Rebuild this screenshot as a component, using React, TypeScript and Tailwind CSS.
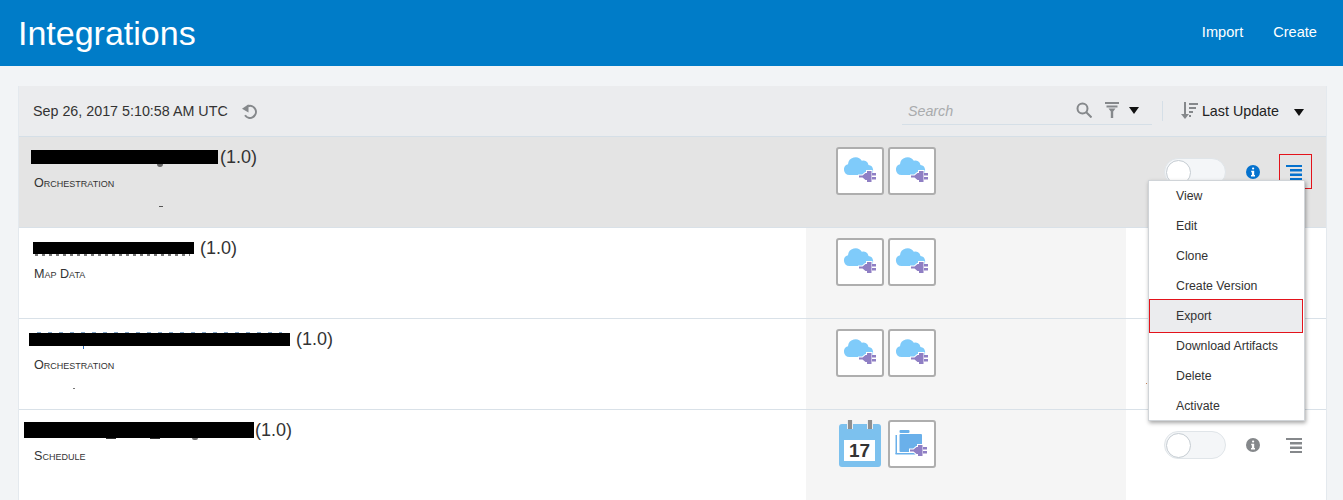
import React from "react";

const Plug = ({ dx = 0, dy = 0 }: { dx?: number; dy?: number }) => (
  <g transform={`translate(${dx} ${dy})`}>
    <path d="M22 28.500h3.500l3-2.500h1.500v-2h4.500v11h-4.500v-2h-1.500l-3-2.500h-3.500z" fill="#fff" stroke="#fff" strokeWidth="2" />
    <path d="M22 28.500h3.500l3-2.500h1.500v-2h4.500v11h-4.500v-2h-1.500l-3-2.500h-3.500z" fill="#8f7fc4" />
    <rect x="35" y="26" width="4" height="2.500" fill="#8f7fc4" />
    <rect x="35" y="30" width="4" height="2.500" fill="#8f7fc4" />
  </g>
);

const CloudTile = () => (
  <div className="w-[48px] h-[48px] bg-white border-2 border-[#aeaeae] rounded-[3px] shrink-0">
    <svg viewBox="0 0 44 44" className="w-[44px] h-[44px]">
      <path
        d="M11.500 26a5.500 5.500 0 0 1-1.500-10.800a7.500 7.500 0 0 1 13.800-3.400a5.200 5.200 0 0 1 6.700 4.100a5.300 5.300 0 0 1 1.500 10.100z"
        fill="#7fcbfa"
      />
      <Plug dx={-1} dy={-2} />
    </svg>
  </div>
);

const FolderTile = () => (
  <div className="w-[48px] h-[48px] bg-white border-2 border-[#aeaeae] rounded-[3px] shrink-0">
    <svg viewBox="0 0 44 44" className="w-[44px] h-[44px]">
      <rect x="9.500" y="8" width="10" height="3" rx="1" fill="#6ab0ea" />
      <rect x="5.500" y="13" width="1.500" height="19" fill="#6ab0ea" />
      <rect x="5.500" y="31" width="20" height="1.500" fill="#6ab0ea" />
      <rect x="9.500" y="12" width="22.500" height="18" rx="1" fill="#6ab0ea" />
      <Plug dx={-2} dy={-1} />
    </svg>
  </div>
);

const Calendar = () => (
  <div className="relative w-[42px] h-[47px] shrink-0 ml-[3px] mr-[7px]">
    <div className="absolute left-0 right-0 top-[4px] bottom-0 bg-[#7cc1ee] rounded-[3px]" />
    <div className="absolute left-[8px] top-0 w-[6px] h-[9px] bg-[#8f8f8f] border-x border-[#e8eef2]" />
    <div className="absolute left-[28px] top-0 w-[6px] h-[9px] bg-[#8f8f8f] border-x border-[#e8eef2]" />
    <div className="absolute left-[5px] right-[6px] top-[20px] h-[21px] bg-white flex items-center justify-center text-[19px] leading-none font-bold text-[#333]">
      17
    </div>
  </div>
);

const Info = ({ color }: { color: string }) => (
  <svg viewBox="0 0 14 14" className="w-[14px] h-[14px]">
    <circle cx="7" cy="7" r="7" fill={color} />
    <rect x="6" y="2.400" width="2.200" height="2.200" rx="1" fill="#fff" />
    <path d="M5.200 5.800h3v4.200h.8v1.400h-4v-1.400h.9v-2.800h-.7z" fill="#fff" />
  </svg>
);

const Lines = ({ color }: { color: string }) => (
  <svg viewBox="0 0 16 15" className="w-[16px] h-[15px]">
    <rect x="0" y="0" width="16" height="2" fill={color} />
    <rect x="4" y="4" width="12" height="2.500" fill={color} />
    <rect x="4" y="8.500" width="12" height="2.500" fill={color} />
    <rect x="4" y="13" width="12" height="2" fill={color} />
  </svg>
);

const Toggle = () => (
  <div className="w-[62px] h-[28px] rounded-full bg-[#f4f6f8] border border-[#e0e5e9] flex items-center pl-[1px] shrink-0">
    <div className="w-[25px] h-[25px] rounded-full bg-white border-[1.5px] border-[#c5ccd2]" />
  </div>
);

const Caret = () => (
  <svg viewBox="0 0 10 7" className="block w-[10px] h-[7px]">
    <path d="M0 0h10l-5 7z" fill="#111" />
  </svg>
);

type RowProps = {
  bar: string;
  after: string;
  type: string;
  selected?: boolean;
  schedule?: boolean;
  ticks?: React.ReactNode;
  speck?: React.ReactNode;
  mark?: boolean;
};

const Row = ({ bar, after, type, selected, schedule, ticks, speck, mark }: RowProps) => (
  <div className={`grid grid-cols-[787px_320px_1fr] h-[91px] border-b border-[#d9e1e8] ${selected ? "bg-[#e4e4e4]" : "bg-white"}`}>
    <div className="min-w-0">
      <div className="flex items-center h-[39px] pt-[1px] text-[18px] text-[#333]">
        <span className={`relative bg-black ${bar}`}>{ticks}</span>
        <span className={after}>(1.0)</span>
      </div>
      <div className="pl-[15px] text-[12.6px] leading-[14px] text-[#333] [font-variant-caps:small-caps]">{type}</div>
      {speck}
    </div>
    <div className={selected ? "pt-[10px]" : "pt-[10px] bg-[#f5f5f5]"}>
      <div className="flex gap-[4px] ml-[30px]">
        {schedule ? <Calendar /> : <CloudTile />}
        {schedule ? <div className="-ml-[4px]"><FolderTile /></div> : <CloudTile />}
      </div>
    </div>
    <div className="flex items-center h-[70px] pl-[38px] relative">
      <Toggle />
      <span className="ml-[20px]">
        <Info color={selected ? "#0572ce" : "#85888b"} />
      </span>
      <span className="ml-[26px]">
        <Lines color={selected ? "#0572ce" : "#85888b"} />
      </span>
      {selected && <div className="absolute left-[153px] top-[17px] w-[33px] h-[35px] border border-[#e3131b]" />}
      {mark && <div className="absolute left-[20px] top-[64px] w-px h-px bg-[#c9855a]" />}
    </div>
  </div>
);

const items = ["View", "Edit", "Clone", "Create Version", "Export", "Download Artifacts", "Delete", "Activate"];

export default function App() {
  return (
    <div className="h-[500px] overflow-hidden bg-[#f2f4f6] font-['Liberation_Sans',Arial,sans-serif]">
      <header className="h-[66px] bg-[#007cc8] flex items-center pl-[18px] pr-[19px] text-white">
        <h1 className="text-[34px] leading-none">Integrations</h1>
        <nav className="ml-auto flex gap-[30px] pr-[7px] text-[14.6px]">
          <span>Import</span>
          <span>Create</span>
        </nav>
      </header>
      <main className="relative mt-[20px] ml-[18px] mr-[16px] border-x border-[#e4e9ee]">
        <div className="h-[51px] bg-[#ebecee] border-b border-[#d5dfe7] flex items-center pl-[14px] text-[14.3px] text-[#333]">
          <span className="pt-[1px]">Sep 26, 2017 5:10:58 AM UTC</span>
          <svg viewBox="0 0 16 16" className="w-[16px] h-[16px] ml-[14px]" fill="none" stroke="#85888b" strokeWidth="2">
            <path d="M6 3.200A6 6 0 1 1 3 12.300" />
            <path d="M0 5.800L6.500 1.200V9.500z" fill="#85888b" stroke="none" />
          </svg>
          <div className="ml-auto flex items-center">
            <div className="w-[250px] h-[30px] border-b border-[#d5dfe7] flex items-center pl-[6px] pt-[4px] mt-[-2px]">
              <span className="italic text-[#a9abad]">Search</span>
              <svg viewBox="0 0 16 16" className="w-[16px] h-[16px] ml-auto -mt-[4px]" fill="none" stroke="#85888b" strokeWidth="2">
                <circle cx="6.500" cy="6.500" r="5" />
                <path d="M10 10l5.500 5.500" />
              </svg>
              <svg viewBox="0 0 14 16" className="w-[14px] h-[16px] ml-[13px] -mt-[4px]" fill="#85888b">
                <rect x="0" y="0" width="14" height="2" />
                <rect x="1.500" y="3.500" width="11" height="2" />
                <path d="M3.500 6.500h7l-2.300 3v6.500h-2.400v-6.500z" />
              </svg>
              <span className="ml-[10px] mr-[13px] -mt-[2px]">
                <Caret />
              </span>
            </div>
            <div className="w-px h-[20px] bg-[#d5dfe7] ml-[10px]" />
            <svg viewBox="0 0 17 18" className="w-[17px] h-[18px] ml-[18px]" fill="#85888b">
              <rect x="3" y="0" width="2" height="15" />
              <path d="M0 12h8l-4 5z" />
              <rect x="8" y="1" width="9" height="2" />
              <rect x="8" y="5" width="7" height="2" />
              <rect x="8" y="9" width="4" height="2" />
              <rect x="8" y="13" width="2" height="2" />
            </svg>
            <span className="ml-[4px] pt-[1px] text-[#222]">Last Update</span>
            <span className="ml-[15px] mr-[22px] pt-[2px]">
              <Caret />
            </span>
          </div>
        </div>

        <Row
          selected
          bar="ml-[12px] w-[187px] h-[14px]"
          after="ml-[2px]"
          type="Orchestration"
          ticks={<span className="absolute left-[126px] top-[14px] w-[6px] h-[3px] rounded-b-[3px] bg-[#666]" />}
          speck={<div className="ml-[140px] mt-[16px] w-[4px] h-px bg-[#555]" />}
        />
        <Row
          bar="ml-[14px] w-[161px] h-[12px]"
          after="ml-[6px]"
          type="Map Data"
          ticks={
            <span className="absolute left-[2px] top-[12px] w-[155px] h-[2px] bg-[repeating-linear-gradient(90deg,#777_0,#777_3px,transparent_3px,transparent_7px)]" />
          }
        />
        <Row
          bar="ml-[10px] w-[261px] h-[13px]"
          after="ml-[6px]"
          type="Orchestration"
          mark
          ticks={
            <>
              <span className="absolute left-[8px] -top-[1px] w-[245px] h-px bg-[repeating-linear-gradient(90deg,#7fa3c7_0,#7fa3c7_4px,transparent_4px,transparent_11px)]" />
              <span className="absolute left-[54px] top-[13px] w-px h-[3px] bg-[#2a6ebb]" />
            </>
          }
          speck={<div className="ml-[54px] mt-[16px] w-[2px] h-px bg-[#777]" />}
        />
        <Row
          schedule
          bar="ml-[5px] w-[230px] h-[16px]"
          after="ml-[1px]"
          type="Schedule"
          ticks={
            <>
              <span className="absolute left-[82px] top-[16px] w-[10px] h-px bg-[#333]" />
              <span className="absolute left-[126px] top-[16px] w-[10px] h-px bg-[#333]" />
              <span className="absolute left-[168px] top-[16px] w-[6px] h-[2px] rounded-b-[3px] bg-[#777]" />
            </>
          }
        />

        <div className="absolute left-[1129px] top-[94px] w-[157px] h-[241px] bg-white border border-[#d0d4d8] shadow-[1px_2px_4px_rgba(0,0,0,0.35)] text-[12.3px] text-[#333]">
          {items.map((t) =>
            t === "Export" ? (
              <div key={t} className="relative z-10 w-[154px] h-[34px] -my-[2px] pl-[26px] flex items-center bg-[#ebecee] border border-[#e3131b]">
                {t}
              </div>
            ) : (
              <div key={t} className="h-[30px] pl-[27px] flex items-center">
                {t}
              </div>
            )
          )}
        </div>
      </main>
    </div>
  );
}
